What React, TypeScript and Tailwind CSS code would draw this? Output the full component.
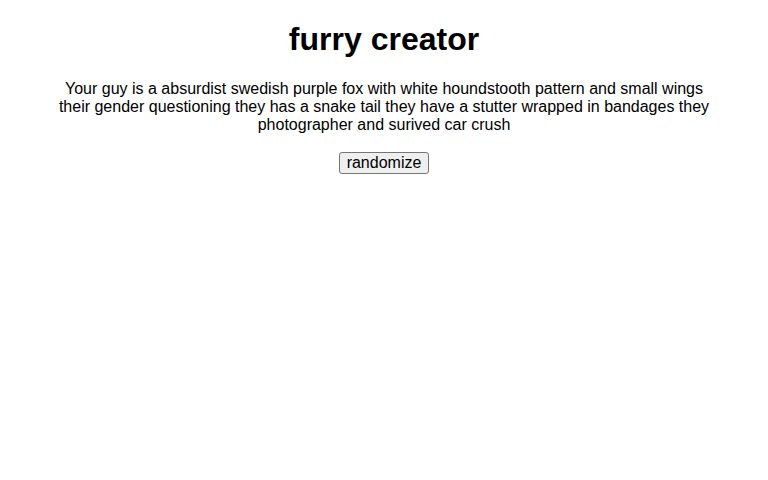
export default function App() {
  return (
    <div className="m-2 text-center text-black font-['Liberation_Sans',Arial,sans-serif] text-base">
      <h1 className="my-[21.44px] text-[32px] font-bold leading-[1.15]">furry creator</h1>
      <p className="mx-auto my-4 max-w-[670px] leading-[1.15]">
        Your guy is a absurdist swedish purple fox with white houndstooth pattern and small wings
        their gender questioning they has a snake tail they have a stutter wrapped in bandages they
        photographer and surived car crush
      </p>
      <button className="rounded-[3px] border border-[#767676] bg-[#efefef] px-[7px] py-px leading-[1.15] text-black">
        randomize
      </button>
    </div>
  );
}
